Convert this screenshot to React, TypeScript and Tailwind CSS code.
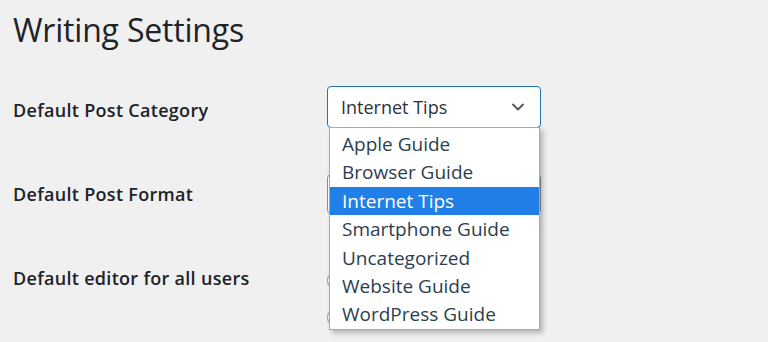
import { ChevronDown } from "lucide-react";

const CATEGORIES = [
  "Apple Guide",
  "Browser Guide",
  "Internet Tips",
  "Smartphone Guide",
  "Uncategorized",
  "Website Guide",
  "WordPress Guide",
];

const font = { fontFamily: '"Open Sans", "Noto Sans", sans-serif' };

const label = "w-[314px] text-[18px] leading-[24px] font-semibold tracking-[0.3px]";

export default function App() {
  return (
    <div
      className="w-[768px] h-[342px] overflow-hidden bg-[#f0f0f1] text-[#1d2327] pl-[13px]"
      style={font}
    >
      <h1 className="text-[32px] leading-none pt-[14px] font-normal tracking-[-0.2px]">
        Writing Settings
      </h1>

      <div className="mt-[40px] flex flex-col">
        {/* Default Post Category */}
        <div className="flex items-start h-[42px]">
          <div className={`${label} pt-[12px]`}>Default Post Category</div>
          <div className="relative">
            <div className="w-[214px] h-[42px] rounded-[4px] border border-[#2271b1] bg-white flex items-center justify-between pl-[13px] pr-[12px] text-[18px] text-[#2c3338]">
              <span>Internet Tips</span>
              <ChevronDown size={20} strokeWidth={2.25} className="text-[#50575e]" />
            </div>

            {/* open list */}
            <ul className="absolute left-[2px] top-[41px] z-20 w-[211px] bg-white border border-[#a7aaad] shadow-[3px_3px_5px_rgba(0,0,0,0.25)] pt-[2px]">
              {CATEGORIES.map((c) => (
                <li
                  key={c}
                  className={`h-[28.4px] flex items-center pl-[12px] text-[19px] ${
                    c === "Internet Tips" ? "bg-[#2180e8] text-white" : "text-[#2c3e50]"
                  }`}
                >
                  {c}
                </li>
              ))}
            </ul>
          </div>
        </div>

        {/* Default Post Format */}
        <div className="flex items-center h-[40px] mt-[46px]">
          <div className={label}>Default Post Format</div>
          <div className="w-[214px] h-[40px] rounded-[4px] border border-[#8c8f94] bg-white" />
        </div>

        {/* Default editor */}
        <div className="flex mt-[52px]">
          <div className={label}>Default editor for all users</div>
          <div className="flex flex-col gap-[16px] pt-[4px]">
            <span className="w-[21px] h-[21px] rounded-full border border-[#8c8f94] bg-white" />
            <span className="w-[21px] h-[21px] rounded-full border border-[#8c8f94] bg-white" />
          </div>
        </div>
      </div>
    </div>
  );
}
